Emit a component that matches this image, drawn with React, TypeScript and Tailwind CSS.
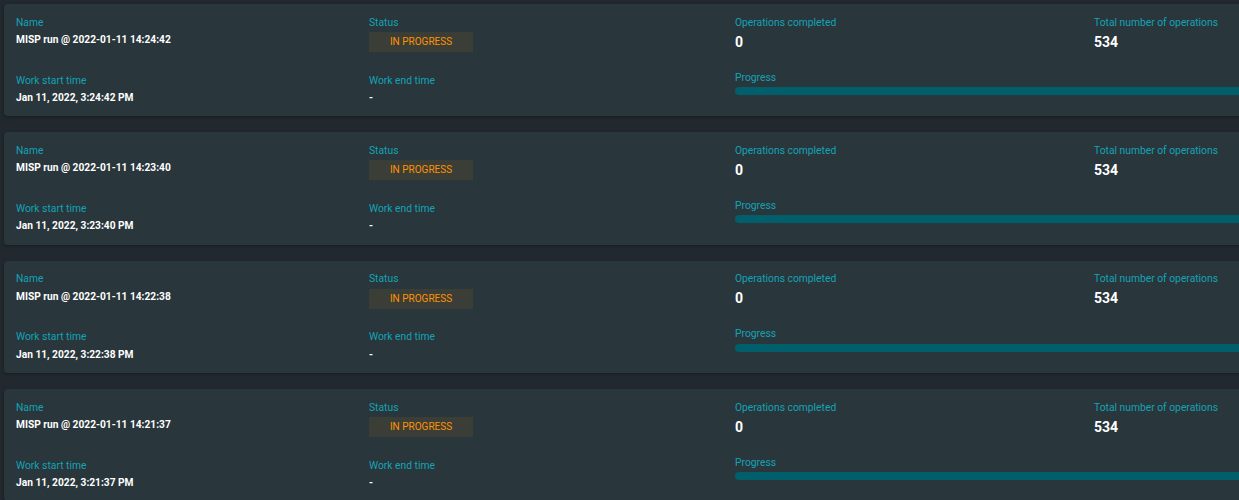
const runs = [
  { name: 'MISP run @ 2022-01-11 14:24:42', start: 'Jan 11, 2022, 3:24:42 PM' },
  { name: 'MISP run @ 2022-01-11 14:23:40', start: 'Jan 11, 2022, 3:23:40 PM' },
  { name: 'MISP run @ 2022-01-11 14:22:38', start: 'Jan 11, 2022, 3:22:38 PM' },
  { name: 'MISP run @ 2022-01-11 14:21:37', start: 'Jan 11, 2022, 3:21:37 PM' },
];

function Label({ children }: { children: React.ReactNode }) {
  return <div className="text-[10.3px] leading-[12px] text-[#14a3b6]">{children}</div>;
}

function Value({ children }: { children: React.ReactNode }) {
  return <div className="mt-[4.4px] text-[10.2px] leading-[14px] font-bold text-white">{children}</div>;
}

function RunCard({ name, start }: { name: string; start: string }) {
  return (
    <div className="w-[1470px] h-[112.33px] shrink-0 rounded-[4px] bg-[#29363b] shadow-[0_1px_3px_rgba(0,0,0,0.35)] pl-3 pt-[12.6px] flex">
      <div className="w-[353px] flex flex-col">
        <div className="h-[58px]">
          <Label>Name</Label>
          <Value>{name}</Value>
        </div>
        <Label>Work start time</Label>
        <Value>{start}</Value>
      </div>
      <div className="w-[366px] flex flex-col">
        <div className="h-[58px]">
          <Label>Status</Label>
          <div className="mt-[3.4px] w-[104px] h-5 bg-[#3b3e37] text-center text-[10px] leading-5 text-[#ff9200]">
            IN PROGRESS
          </div>
        </div>
        <Label>Work end time</Label>
        <Value>-</Value>
      </div>
      <div className="flex-1 flex flex-col">
        <div className="h-[55px] flex">
          <div className="w-[359px]">
            <Label>Operations completed</Label>
            <div className="mt-[5px] text-[14px] leading-[17px] font-bold text-white">0</div>
          </div>
          <div>
            <Label>Total number of operations</Label>
            <div className="mt-[5px] text-[14px] leading-[17px] font-bold text-white">534</div>
          </div>
        </div>
        <Label>Progress</Label>
        <div className="mt-[3.4px] h-2 w-[718px] rounded-full bg-[#005f6a]" />
      </div>
    </div>
  );
}

export default function App() {
  return (
    <div className="w-[1239px] h-[500px] overflow-hidden bg-[#22292e] pl-1 pt-1 flex flex-col gap-4 font-['Roboto',sans-serif]">
      {runs.map((r) => (
        <RunCard key={r.name} name={r.name} start={r.start} />
      ))}
    </div>
  );
}
